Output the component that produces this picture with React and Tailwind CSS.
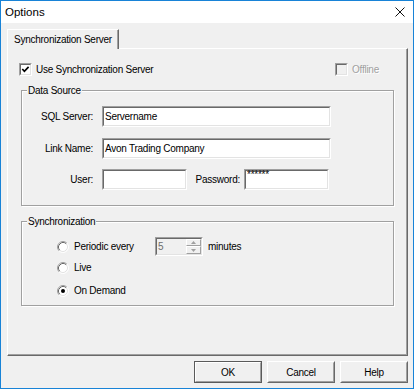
import React from "react";

const FONT = "font-['Liberation_Sans',Arial,sans-serif] text-[10px] leading-[13px] tracking-[-0.25px]";

function Check({ checked, disabled }) {
  return (
    <div className="w-[13px] h-[13px] shrink-0 border border-t-[#a0a0a0] border-l-[#a0a0a0] border-r-white border-b-white">
      <div
        className={`w-full h-full border border-t-[#696969] border-l-[#696969] border-r-[#e3e3e3] border-b-[#e3e3e3] flex items-center justify-center ${
          disabled ? "bg-[#f0f0f0]" : "bg-white"
        }`}
      >
        {checked && (
          <svg width="9" height="9" viewBox="0 0 9 9">
            <path d="M1.3 4 L3.4 6.3 L7.6 1.9" stroke="#000" strokeWidth="1.7" fill="none" />
          </svg>
        )}
      </div>
    </div>
  );
}

function Radio({ checked }) {
  return (
    <svg width="12" height="12" viewBox="0 0 12 12" className="shrink-0">
      <circle cx="6" cy="6" r="5" fill="#fff" />
      <path d="M2.11 9.89 A5.5 5.5 0 0 1 9.89 2.11" stroke="#a0a0a0" strokeWidth="1" fill="none" />
      <path d="M9.89 2.11 A5.5 5.5 0 0 1 2.11 9.89" stroke="#ffffff" strokeWidth="1" fill="none" />
      <path d="M2.82 9.18 A4.5 4.5 0 0 1 9.18 2.82" stroke="#696969" strokeWidth="1" fill="none" />
      <path d="M9.18 2.82 A4.5 4.5 0 0 1 2.82 9.18" stroke="#e3e3e3" strokeWidth="1" fill="none" />
      {checked && <circle cx="6" cy="6" r="2" fill="#000" />}
    </svg>
  );
}

function Field({ w, children, disabled }) {
  return (
    <div className={`${w} h-[21px] shrink-0 border border-t-[#a0a0a0] border-l-[#a0a0a0] border-r-white border-b-white`}>
      <div
        className={`w-full h-full border border-t-[#696969] border-l-[#696969] border-r-[#e3e3e3] border-b-[#e3e3e3] flex items-center pl-[1px] ${
          disabled ? "bg-[#f0f0f0]" : "bg-white"
        }`}
      >
        {children}
      </div>
    </div>
  );
}

function Btn({ children, def }) {
  if (def) {
    return (
      <div className="w-[68px] h-[22px] border border-[#5a5a5a] bg-[#f0f0f0]">
        <div className="w-full h-full border border-t-white border-l-white border-r-[#a0a0a0] border-b-[#a0a0a0] flex items-center justify-center">
          {children}
        </div>
      </div>
    );
  }
  return (
    <div className="w-[68px] h-[22px] border border-t-white border-l-white border-r-[#696969] border-b-[#696969] bg-[#f0f0f0]">
      <div className="w-full h-full border border-t-[#f0f0f0] border-l-[#f0f0f0] border-r-[#a0a0a0] border-b-[#a0a0a0] flex items-center justify-center">
        {children}
      </div>
    </div>
  );
}

function SpinBtn({ up, h }) {
  return (
    <div className={`${h} w-full border border-t-white border-l-white border-r-[#a0a0a0] border-b-[#a0a0a0] bg-[#f0f0f0] flex items-center justify-center`}>
      <svg width="5" height="3" viewBox="0 0 5 3">
        {up ? <path d="M2.5 0 L5 3 L0 3 Z" fill="#a0a0a0" /> : <path d="M0 0 L5 0 L2.5 3 Z" fill="#a0a0a0" />}
      </svg>
    </div>
  );
}

function Group({ label, className, children }) {
  return (
    <div
      className={`relative ml-[13px] w-[373px] border border-[#a0a0a0] shadow-[inset_1px_1px_0_#fff,1px_1px_0_#fff] ${className}`}
    >
      <span className="absolute left-[5px] -top-[7px] px-[1px] bg-[#f0f0f0] leading-[14px]">{label}</span>
      {children}
    </div>
  );
}

export default function App() {
  return (
    <div className={`w-[414px] h-[389px] border border-[#1883d7] flex flex-col bg-[#f0f0f0] text-black ${FONT}`}>
      {/* Title bar */}
      <div className="h-[22px] bg-white flex items-center justify-between pl-[4px] pr-[8px] shrink-0">
        <span className="text-[11.5px] leading-[14px] tracking-normal">Options</span>
        <svg width="10" height="10" viewBox="0 0 10 10">
          <path d="M0.5 0.5 L9.5 9.5 M9.5 0.5 L0.5 9.5" stroke="#111" strokeWidth="1" fill="none" />
        </svg>
      </div>

      {/* Body */}
      <div className="flex-1 flex flex-col pl-[6px] pr-[5px] pt-[6px]">
        {/* Tab */}
        <div className="relative z-10 w-[112px] h-[20px] border-t border-l border-r border-t-white border-l-white border-r-[#696969] shadow-[inset_-1px_0_0_#a0a0a0] bg-[#f0f0f0] flex items-center pl-[6px] whitespace-nowrap">
          Synchronization Server
        </div>

        {/* Panel */}
        <div className="h-[308px] -mt-[1px] border border-t-white border-l-white border-r-[#696969] border-b-[#696969] shadow-[inset_-1px_-1px_0_#a0a0a0] flex flex-col">
          {/* Checkbox row */}
          <div className="flex items-center h-[13px] mt-[14px] pl-[11px]">
            <div className="w-[316px] flex items-center">
              <Check checked />
              <span className="ml-[4px]">Use Synchronization Server</span>
            </div>
            <div className="flex items-center">
              <Check disabled />
              <span className="ml-[4px] text-[#a0a0a0] [text-shadow:1px_1px_0_#fff]">Offline</span>
            </div>
          </div>

          {/* Data Source */}
          <Group label="Data Source" className="mt-[14px] pt-[15px] pb-[15px] flex flex-col">
            <div className="flex items-center h-[21px]">
              <span className="w-[71px] text-right">SQL Server:</span>
              <div className="ml-[9px]">
                <Field w="w-[229px]">Servername</Field>
              </div>
            </div>
            <div className="flex items-center h-[21px] mt-[11px]">
              <span className="w-[71px] text-right">Link Name:</span>
              <div className="ml-[9px]">
                <Field w="w-[229px]">Avon Trading Company</Field>
              </div>
            </div>
            <div className="flex items-center h-[21px] mt-[10px]">
              <span className="w-[71px] text-right">User:</span>
              <div className="ml-[9px]">
                <Field w="w-[85px]" />
              </div>
              <span className="w-[53px] text-right">Password:</span>
              <div className="ml-[4px]">
                <Field w="w-[85px]">
                  <span className="self-start mt-[-1px] text-[10px] leading-[10px]">******</span>
                </Field>
              </div>
            </div>
          </Group>

          {/* Synchronization */}
          <Group label="Synchronization" className="mt-[15px] pt-[15px] pb-[6px] pl-[35px] flex flex-col">
            <div className="flex items-center h-[19px]">
              <div className="w-[98px] flex items-center">
                <Radio />
                <span className="ml-[5px]">Periodic every</span>
              </div>
              <div className="w-[48px] h-[19px] border border-t-[#a0a0a0] border-l-[#a0a0a0] border-r-white border-b-white">
                <div className="w-full h-full border border-t-[#696969] border-l-[#696969] border-r-[#e3e3e3] border-b-[#e3e3e3] bg-[#f0f0f0] flex">
                  <span className="pl-[1px] self-center text-[#6d6d6d]">5</span>
                  <div className="ml-auto w-[15px] flex flex-col">
                    <SpinBtn up h="h-[7px]" />
                    <SpinBtn h="h-[8px]" />
                  </div>
                </div>
              </div>
              <span className="ml-[5px]">minutes</span>
            </div>
            <div className="flex items-center h-[17px] mt-[3px]">
              <Radio />
              <span className="ml-[5px]">Live</span>
            </div>
            <div className="flex items-center h-[17px] mt-[6px]">
              <Radio checked />
              <span className="ml-[5px]">On Demand</span>
            </div>
          </Group>
        </div>

        {/* Buttons */}
        <div className="flex justify-end gap-[5px] mt-[5px]">
          <Btn def>OK</Btn>
          <Btn>Cancel</Btn>
          <Btn>Help</Btn>
        </div>
      </div>
    </div>
  );
}
